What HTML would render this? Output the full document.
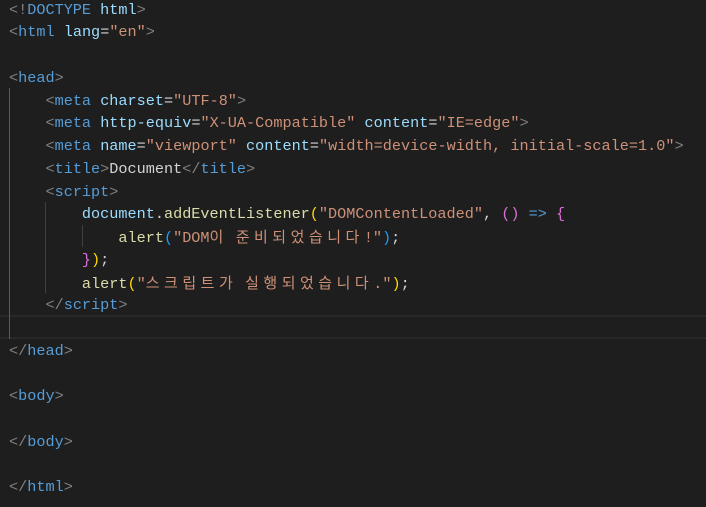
<!DOCTYPE html>
<html><head><meta charset="UTF-8"><style>
html,body{margin:0;padding:0;background:#1e1e1e;width:706px;height:507px;overflow:hidden}
.l{position:absolute;left:9px;height:22.75px;line-height:22.75px;font-family:"Liberation Mono",monospace;font-size:15.2px;white-space:pre;color:#d4d4d4;margin-top:1px}
.p{color:#808080}.t{color:#569cd6}.a{color:#9cdcfe}.s{color:#ce9178}.f{color:#dcdcaa}
.y{color:#ffd700}.m{color:#da70d6}.b{color:#179fff}
.k{font-family:"Noto Sans CJK KR","NanumGothic",sans-serif;letter-spacing:4.5px;font-size:15px}
.g{position:absolute;width:1px;background:#404040}
.cur{position:absolute;left:0;width:706px;border-top:2px solid #282828;border-bottom:2px solid #282828}
</style></head><body>
<div class="cur" style="top:315px;height:20px"></div>
<div class="g" style="left:9px;top:88px;height:251px;background:#5a5a5a"></div>
<div class="g" style="left:45px;top:202px;height:91px"></div>
<div class="g" style="left:82px;top:225px;height:22px"></div>
<div class="l" style="top:-2.4px"><span class="p">&lt;!</span><span class="t">DOCTYPE</span> <span class="a">html</span><span class="p">&gt;</span></div>
<div class="l" style="top:20.35px"><span class="p">&lt;</span><span class="t">html</span> <span class="a">lang</span>=<span class="s">"en"</span><span class="p">&gt;</span></div>
<div class="l" style="top:65.85px"><span class="p">&lt;</span><span class="t">head</span><span class="p">&gt;</span></div>
<div class="l" style="top:88.6px">    <span class="p">&lt;</span><span class="t">meta</span> <span class="a">charset</span>=<span class="s">"UTF-8"</span><span class="p">&gt;</span></div>
<div class="l" style="top:111.35px">    <span class="p">&lt;</span><span class="t">meta</span> <span class="a">http-equiv</span>=<span class="s">"X-UA-Compatible"</span> <span class="a">content</span>=<span class="s">"IE=edge"</span><span class="p">&gt;</span></div>
<div class="l" style="top:134.1px">    <span class="p">&lt;</span><span class="t">meta</span> <span class="a">name</span>=<span class="s">"viewport"</span> <span class="a">content</span>=<span class="s">"width=device-width, initial-scale=1.0"</span><span class="p">&gt;</span></div>
<div class="l" style="top:156.85px">    <span class="p">&lt;</span><span class="t">title</span><span class="p">&gt;</span>Document<span class="p">&lt;/</span><span class="t">title</span><span class="p">&gt;</span></div>
<div class="l" style="top:179.6px">    <span class="p">&lt;</span><span class="t">script</span><span class="p">&gt;</span></div>
<div class="l" style="top:202.35px">        <span class="a">document</span>.<span class="f">addEventListener</span><span class="y">(</span><span class="s">"DOMContentLoaded"</span>, <span class="m">()</span> <span class="t">=&gt;</span> <span class="m">{</span></div>
<div class="l" style="top:225.1px">            <span class="f">alert</span><span class="b">(</span><span class="s">"DOM<span class="k">이 준비되었습니다</span>!"</span><span class="b">)</span>;</div>
<div class="l" style="top:247.85px">        <span class="m">}</span><span class="y">)</span>;</div>
<div class="l" style="top:270.6px">        <span class="f">alert</span><span class="y">(</span><span class="s">"<span class="k">스크립트가 실행되었습니다</span>."</span><span class="y">)</span>;</div>
<div class="l" style="top:293.35px">    <span class="p">&lt;/</span><span class="t">script</span><span class="p">&gt;</span></div>
<div class="l" style="top:338.85px"><span class="p">&lt;/</span><span class="t">head</span><span class="p">&gt;</span></div>
<div class="l" style="top:384.35px"><span class="p">&lt;</span><span class="t">body</span><span class="p">&gt;</span></div>
<div class="l" style="top:429.85px"><span class="p">&lt;/</span><span class="t">body</span><span class="p">&gt;</span></div>
<div class="l" style="top:475.35px"><span class="p">&lt;/</span><span class="t">html</span><span class="p">&gt;</span></div>
</body></html>
